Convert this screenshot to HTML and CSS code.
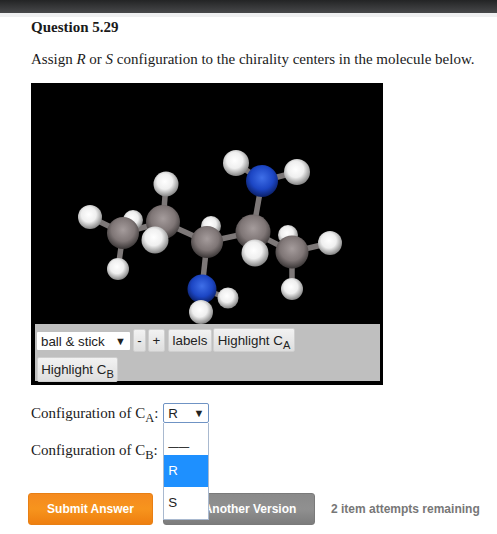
FILE: index.html
```html
<!DOCTYPE html>
<html lang="en">
  <head>
    <meta charset="UTF-8" />
    <title>Question 5.29</title>
    <link rel="stylesheet" href="styles.css">
  </head>
  <body>
    <div class="topbar"></div>
    <div class="topband"></div>
    <div class="container">
      <h2>Question 5.29</h2>
      <p class="prompt">Assign <i>R</i> or <i>S</i> configuration to the chirality centers in the molecule below.</p>

      <div class="viewer">
        <svg class="molecule" width="344" height="241" viewBox="35 83 344 241">
          <defs>
            <radialGradient id="hydrogen" cx="0.45" cy="0.4" r="0.62">
              <stop offset="0" stop-color="#ffffff" />
              <stop offset="0.5" stop-color="#efefef" />
              <stop offset="1" stop-color="#7f7f7f" />
            </radialGradient>
            <radialGradient id="carbon" cx="0.5" cy="0.4" r="0.6">
              <stop offset="0" stop-color="#a59c9c" />
              <stop offset="0.6" stop-color="#7f7676" />
              <stop offset="1" stop-color="#3a3636" />
            </radialGradient>
            <radialGradient id="nitrogen" cx="0.5" cy="0.4" r="0.6">
              <stop offset="0" stop-color="#3f6fe8" />
              <stop offset="0.6" stop-color="#1c46c4" />
              <stop offset="1" stop-color="#0b1f66" />
            </radialGradient>
          </defs>

          <g class="bonds">
            <line x1="123" y1="233" x2="90" y2="217" />
            <line x1="123" y1="233" x2="118" y2="269" />
            <line x1="123" y1="233" x2="163" y2="222" />
            <line x1="163" y1="222" x2="166" y2="184" />
            <line x1="163" y1="222" x2="207" y2="242" />
            <line x1="207" y1="242" x2="253" y2="232" />
            <line x1="207" y1="242" x2="202" y2="289" />
            <line x1="202" y1="289" x2="228" y2="298" />
            <line x1="202" y1="289" x2="201" y2="312" />
            <line x1="253" y1="232" x2="262" y2="181" />
            <line x1="253" y1="232" x2="292" y2="252" />
            <line x1="262" y1="181" x2="236" y2="163" />
            <line x1="262" y1="181" x2="297" y2="172" />
            <line x1="292" y1="252" x2="330" y2="243" />
            <line x1="292" y1="252" x2="292" y2="289" />
          </g>

          <circle cx="133" cy="220" r="10" fill="url(#hydrogen)" />
          <circle cx="211" cy="226" r="10" fill="url(#hydrogen)" />
          <circle cx="288" cy="235" r="10" fill="url(#hydrogen)" />
          <circle cx="90" cy="217" r="12" fill="url(#hydrogen)" />
          <circle cx="118" cy="269" r="11" fill="url(#hydrogen)" />
          <circle cx="166" cy="184" r="12.5" fill="url(#hydrogen)" />
          <circle cx="330" cy="243" r="12" fill="url(#hydrogen)" />
          <circle cx="292" cy="289" r="11" fill="url(#hydrogen)" />
          <circle cx="236" cy="163" r="13" fill="url(#hydrogen)" />
          <circle cx="297" cy="172" r="13" fill="url(#hydrogen)" />
          <circle cx="228" cy="298" r="10.5" fill="url(#hydrogen)" />

          <circle cx="123" cy="233" r="16" fill="url(#carbon)" />
          <circle cx="163" cy="222" r="17" fill="url(#carbon)" />
          <circle cx="207" cy="242" r="16" fill="url(#carbon)" />
          <circle cx="253" cy="232" r="17.5" fill="url(#carbon)" />
          <circle cx="292" cy="252" r="16.5" fill="url(#carbon)" />
          <circle cx="262" cy="181" r="16" fill="url(#nitrogen)" />
          <circle cx="202" cy="289" r="14.5" fill="url(#nitrogen)" />

          <circle cx="155" cy="240" r="13.5" fill="url(#hydrogen)" />
          <circle cx="255" cy="253" r="13.5" fill="url(#hydrogen)" />
          <circle cx="201" cy="312" r="12" fill="url(#hydrogen)" />
        </svg>

        <div class="controls">
          <div class="select style-select"><span>ball &amp; stick</span><span class="arrow">▼</span></div>
          <button class="tool minus">-</button>
          <button class="tool plus">+</button>
          <button class="tool labels">labels</button>
          <button class="tool highlight">Highlight C<sub>A</sub></button>
          <button class="tool highlight second">Highlight C<sub>B</sub></button>
        </div>
      </div>

      <div class="config">
        <div class="config-row">
          <span>Configuration of C<sub>A</sub>:</span>
          <div class="select config-select focused">
            <span>R</span><span class="arrow">▼</span>
            <ul class="dropdown">
              <li class="blank">——</li>
              <li class="active">R</li>
              <li>S</li>
            </ul>
          </div>
        </div>
        <div class="config-row">
          <span>Configuration of C<sub>B</sub>:</span>
          <div class="select config-select"></div>
        </div>
      </div>

      <div class="actions">
        <button class="btn submit">Submit Answer</button>
        <button class="btn another">Another Version</button>
        <span class="attempts">2 item attempts remaining</span>
      </div>
    </div>
  </body>
</html>
```

FILE: styles.css
```css
body {
  margin: 0;
  background: #ffffff;
  color: #1a1a1a;
  font-family: "Liberation Serif", serif;
}

.topbar {
  height: 13px;
  background: linear-gradient(#232425, #48494b);
}

.topband {
  height: 4px;
  background: #eff0f1;
}

.container {
  padding-left: 31px;
}

h2 {
  margin: 1px 0 0;
  font-size: 15px;
  line-height: 18px;
  font-weight: bold;
}

.prompt {
  margin: 14px 0 0;
  font-size: 15px;
  line-height: 19px;
  white-space: nowrap;
}

.viewer {
  width: 345px;
  margin-top: 14px;
  padding: 0 3px 4px 4px;
  background: #000000;
}

.molecule {
  display: block;
}

.bonds line {
  stroke: #7d7878;
  stroke-width: 5.5;
}

.controls {
  display: flex;
  flex-wrap: wrap;
  align-items: flex-start;
  align-content: flex-start;
  row-gap: 5px;
  height: 57px;
  box-sizing: border-box;
  padding: 4px 70px 0 2px;
  background: #bfbfbf;
  font-family: "Liberation Sans", sans-serif;
}

.tool {
  box-sizing: border-box;
  height: 23px;
  margin-top: 1px;
  padding: 0;
  border: 1px solid #cfcfcf;
  border-radius: 2px;
  background: linear-gradient(#f2f2f2, #dedede);
  color: #222222;
  font-family: inherit;
  font-size: 13.33px;
}

.minus {
  width: 13px;
  margin-left: 3px;
}

.plus {
  width: 17px;
  margin-left: 2px;
}

.labels {
  width: 44px;
  margin-left: 3px;
}

.highlight {
  width: 82px;
  height: 24px;
  margin: 0 0 0 1px;
}

.highlight.second {
  width: 81px;
  height: 25px;
  margin-left: 0;
}

.tool sub,
.config-row sub {
  font-size: 0.83em;
  line-height: 0;
}

.select {
  box-sizing: border-box;
  display: flex;
  justify-content: space-between;
  align-items: center;
  background: #ffffff;
  color: #222222;
  font-family: "Liberation Sans", sans-serif;
  font-size: 13.33px;
}

.arrow {
  font-size: 11px;
}

.style-select {
  width: 93px;
  height: 18px;
  margin-top: 4px;
  padding: 0 4px;
  border-radius: 1px;
}

.config {
  margin-top: 18px;
}

.config-row {
  display: flex;
  align-items: center;
  gap: 5px;
  height: 20px;
  margin-bottom: 17px;
  font-size: 15px;
}

.config-select {
  position: relative;
  width: 46px;
  height: 20px;
  padding: 0 4px;
  border: 1px solid #7f9db9;
  border-radius: 2px;
}

.config-select.focused {
  border-color: #6f93c4;
  z-index: 2;
}

.dropdown {
  position: absolute;
  left: -1px;
  top: 19px;
  box-sizing: border-box;
  width: 46px;
  margin: 0;
  padding: 0;
  list-style: none;
  background: #ffffff;
  border: 1px solid #a9b9cf;
  border-top: none;
}

.dropdown li {
  height: 32px;
  line-height: 32px;
  padding-left: 4px;
}

.dropdown li.blank {
  box-sizing: border-box;
  padding-top: 15px;
  line-height: 16px;
  font-size: 10.5px;
  color: #000000;
}

.dropdown li.active {
  background: #1e90ff;
  color: #ffffff;
}

.actions {
  display: flex;
  align-items: center;
  margin-top: 33px;
  margin-left: -3px;
  font-family: "Liberation Sans", sans-serif;
  font-weight: bold;
  font-size: 12px;
}

.btn {
  height: 32px;
  border-radius: 3px;
  color: #ffffff;
  font-family: inherit;
  font-weight: bold;
  font-size: 12px;
}

.submit {
  width: 125px;
  border: 1px solid #e87f14;
  background: linear-gradient(#f58a1f, #f7941d 50%, #ee7f10);
}

.another {
  width: 152px;
  margin-left: 10px;
  padding-left: 28px;
  border: 1px solid #7a7a7a;
  background: linear-gradient(#8a8a8a, #909090 50%, #7c7c7c);
}

.attempts {
  margin-left: 16px;
  color: #777777;
}
```
